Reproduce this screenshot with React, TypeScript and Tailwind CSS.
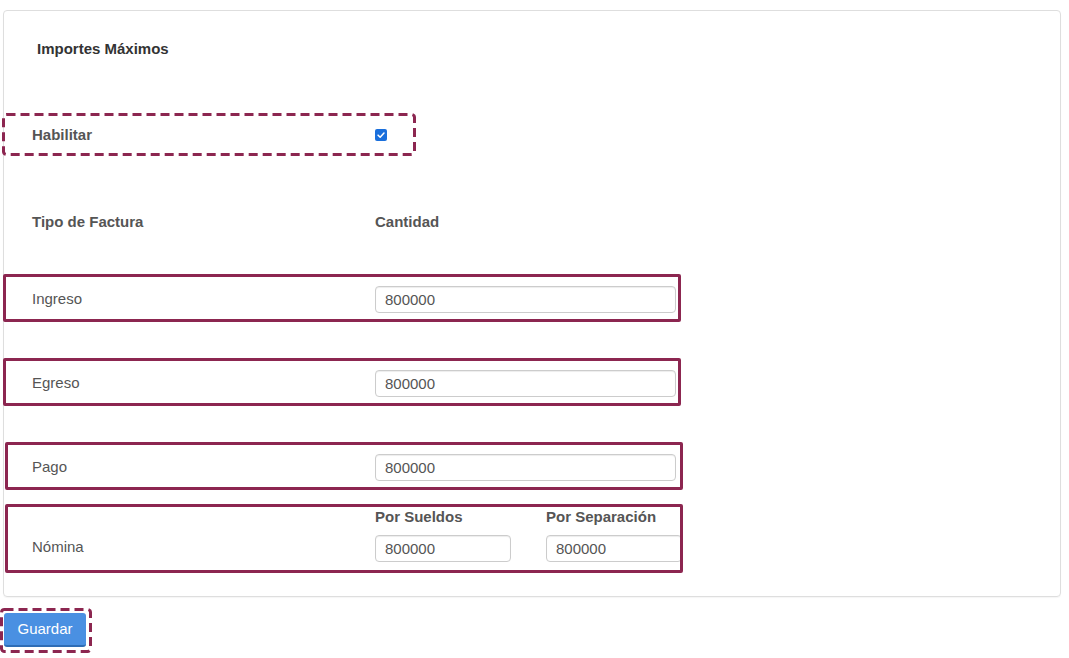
import React from "react";

// annotation frame drawn over a fixed-size area
function DashedFrame({ w, h }: { w: number; h: number }) {
  return (
    <svg width={w} height={h} className="pointer-events-none absolute left-0 top-0">
      <rect
        x={1.5}
        y={1.5}
        width={w - 3}
        height={h - 3}
        rx={3}
        fill="none"
        stroke="#8c2650"
        strokeWidth={3}
        strokeDasharray="9 5"
      />
    </svg>
  );
}

function Amount({ value, className }: { value: string; className: string }) {
  return (
    <input
      type="text"
      defaultValue={value}
      className={`h-[27px] shrink-0 rounded-[4px] border border-[#cccccc] bg-white px-[9px] text-[15px] text-[#555555] shadow-[inset_0_1px_1px_rgba(0,0,0,0.075)] outline-none ${className}`}
    />
  );
}

function InvoiceRow({ label, shift }: { label: string; shift?: boolean }) {
  return (
    <div
      className={`flex h-[48px] w-[678px] items-center rounded-[2px] border-[3px] border-[#8c2650] pt-[3px] ${
        shift ? "ml-[2px]" : "ml-0"
      }`}
    >
      <div
        className={`shrink-0 text-[15px] text-[#555555] ${
          shift ? "w-[367px] pl-[24px]" : "w-[369px] pl-[26px]"
        }`}
      >
        {label}
      </div>
      <Amount value="800000" className="w-[301px]" />
    </div>
  );
}

export default function App() {
  return (
    <div
      className="min-h-[658px] w-[1069px] bg-white text-[#333333]"
      style={{ fontFamily: '"Liberation Sans", Arial, sans-serif' }}
    >
      <div className="ml-[3px] pt-[10px]">
        <div className="flex h-[587px] w-[1058px] flex-col rounded-[4px] border border-[#dedede] shadow-[0_1px_1px_rgba(0,0,0,0.04)]">
          <h2 className="ml-[33px] mt-[28px] text-[15px] font-bold leading-[20px] text-[#333333]">
            Importes Máximos
          </h2>

          {/* enable toggle */}
          <div className="relative -ml-[2px] mt-[54px] flex h-[43px] w-[414px] items-center">
            <div className="w-[373px] shrink-0 pl-[30px] pt-[1px] text-[15px] font-bold text-[#555555]">
              Habilitar
            </div>
            <span className="flex h-[12px] w-[12px] items-center justify-center rounded-[2px] bg-[#1a6fdc]">
              <svg viewBox="0 0 12 12" className="h-[10px] w-[10px]">
                <path d="M2.5 6.2 L5 8.6 L9.6 3.6" fill="none" stroke="white" strokeWidth="1.8" strokeLinecap="round" strokeLinejoin="round" />
              </svg>
            </span>
            <DashedFrame w={414} h={43} />
          </div>

          {/* column headers */}
          <div className="mt-[56px] flex text-[15px] font-bold leading-[20px] text-[#555555]">
            <div className="w-[371px] shrink-0 pl-[28px]">Tipo de Factura</div>
            <div>Cantidad</div>
          </div>

          <div className="-ml-[1px] mt-[42px]">
            <InvoiceRow label="Ingreso" />
          </div>
          <div className="-ml-[1px] mt-[36px]">
            <InvoiceRow label="Egreso" />
          </div>
          <div className="-ml-[1px] mt-[36px]">
            <InvoiceRow label="Pago" shift />
          </div>

          {/* payroll */}
          <div className="ml-[1px] mt-[14px] flex h-[69px] w-[678px] overflow-hidden rounded-[2px] border-[3px] border-[#8c2650]">
            <div className="w-[367px] shrink-0 self-end pb-[12px] pl-[24px] text-[15px] text-[#555555]">
              Nómina
            </div>
            <div className="flex shrink-0 flex-col">
              <div className="flex text-[15px] font-bold leading-[20px] text-[#555555]">
                <div className="w-[171px] shrink-0">Por Sueldos</div>
                <div className="whitespace-nowrap">Por Separación</div>
              </div>
              <div className="mt-[8px] flex">
                <Amount value="800000" className="w-[136px]" />
                <Amount value="800000" className="ml-[35px] w-[136px]" />
              </div>
            </div>
          </div>
        </div>
      </div>

      {/* save */}
      <div className="relative mt-[11px] flex h-[45px] w-[92px] items-start pl-[4px] pt-[5px]">
        <button
          type="button"
          className="h-[34px] w-[82px] rounded-[3px] border-b-[2px] border-[#2f6db5] bg-[#4a90e2] text-[15px] text-white"
        >
          Guardar
        </button>
        <DashedFrame w={92} h={45} />
      </div>
    </div>
  );
}
